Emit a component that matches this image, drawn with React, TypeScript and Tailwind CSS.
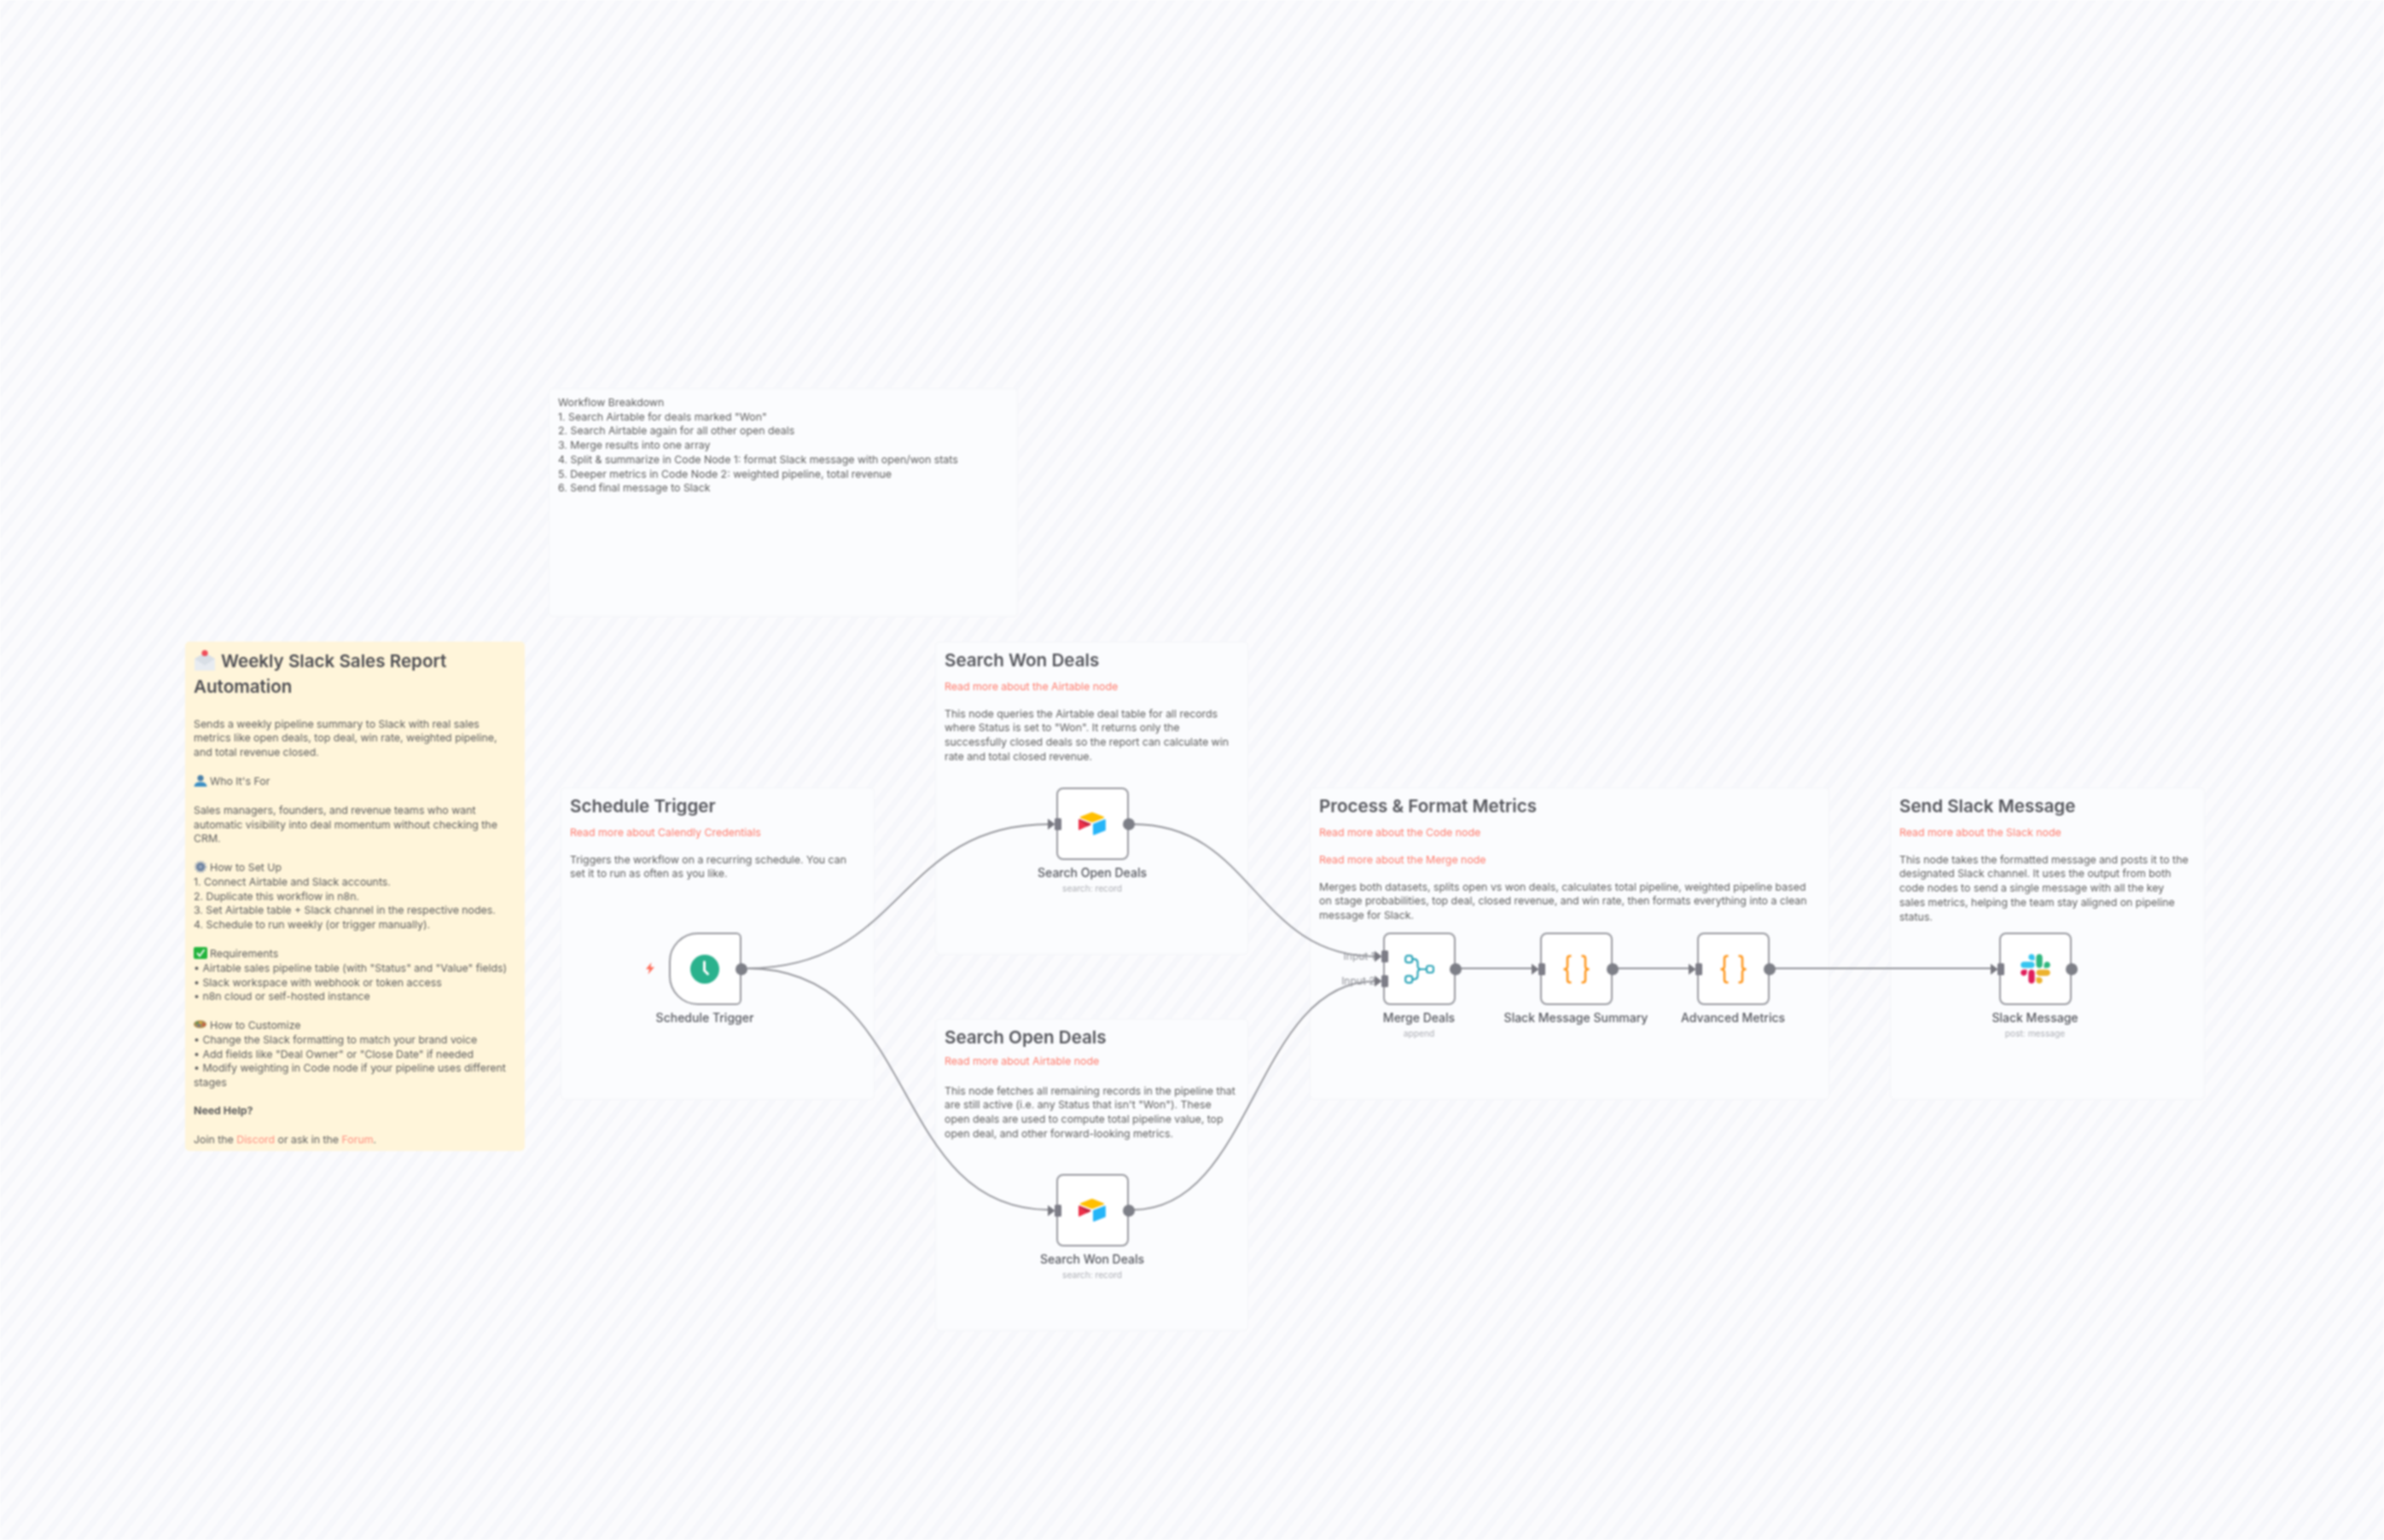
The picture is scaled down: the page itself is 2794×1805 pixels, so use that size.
import React from "react";

const bodyFont = "font-['Inter',sans-serif]";

function Mail() {
  return (
    <svg viewBox="0 0 26 26" className="inline-block w-[26px] h-[26px] mr-[6px] align-[-5px]">
      <path d="M1 11 L13 4 L25 11 V25 H1 Z" fill="#d9dfe6" />
      <path d="M1 11 L13 19 L25 11 V25 H1 Z" fill="#e8ecf1" />
      <circle cx="13" cy="4.5" r="3.6" fill="#ef4d5a" />
    </svg>
  );
}

function Person() {
  return (
    <svg viewBox="0 0 16 14" className="inline-block w-[16px] h-[14px] mr-[3px] align-[-2px]">
      <circle cx="8" cy="4" r="3.6" fill="#4a7fa8" />
      <path d="M0.5 14 C1 9.5 4.5 8.5 8 8.5 C11.5 8.5 15 9.5 15.5 14 Z" fill="#3d8fc4" />
    </svg>
  );
}

function Gear() {
  return (
    <svg viewBox="0 0 16 16" className="inline-block w-[16px] h-[14px] mr-[3px] align-[-2px]">
      <circle cx="8" cy="8" r="6" fill="#6f83a0" />
      <circle cx="8" cy="8" r="7.3" fill="none" stroke="#8d9cb3" strokeWidth="1.6" strokeDasharray="2 1.6" />
      <circle cx="8" cy="8" r="2.4" fill="#9aa9bf" />
    </svg>
  );
}

function Check() {
  return (
    <svg viewBox="0 0 16 14" className="inline-block w-[16px] h-[14px] mr-[3px] align-[-2px]">
      <rect x="0" y="0" width="16" height="14" rx="2" fill="#22b43c" />
      <path d="M4 7 L7 10.5 L12.5 3" fill="none" stroke="#e9f7ea" strokeWidth="2" />
    </svg>
  );
}

function Palette() {
  return (
    <svg viewBox="0 0 16 12" className="inline-block w-[16px] h-[12px] mr-[3px] align-[-1px]">
      <ellipse cx="7.5" cy="5.5" rx="7.5" ry="4.6" fill="#a98a52" />
      <circle cx="4" cy="4" r="1.5" fill="#4f9a5a" />
      <circle cx="8" cy="3.4" r="1.4" fill="#e2b93b" />
      <circle cx="12" cy="6" r="1.8" fill="#d2553f" />
      <circle cx="6" cy="7" r="1.3" fill="#5a6fb0" />
    </svg>
  );
}

function AirtableLogo() {
  return (
    <svg viewBox="0 0 200 170" className="w-[36px] h-[31px]">
      <path d="M90.039 12.368 24.079 39.66c-3.667 1.519-3.63 6.729.062 8.192l66.235 26.266a24.58 24.58 0 0 0 18.12 0l66.236-26.266c3.69-1.463 3.729-6.673.062-8.192l-65.96-27.292a24.58 24.58 0 0 0-18.795 0" fill="#FFBF00" />
      <path d="M105.312 88.46v65.617c0 3.12 3.147 5.258 6.048 4.108l73.806-28.648a4.42 4.42 0 0 0 2.79-4.108V59.813c0-3.121-3.147-5.258-6.048-4.108l-73.806 28.648a4.42 4.42 0 0 0-2.79 4.108" fill="#26B5F8" />
      <path d="M88.078 91.846l-21.904 10.576-2.224 1.075-46.238 22.155c-2.93 1.414-6.672-.722-6.672-3.978V60.088c0-1.178.604-2.195 1.414-2.96a5.02 5.02 0 0 1 1.12-.84c1.104-.663 2.68-.84 4.02-.31l70.118 27.782c3.564 1.414 3.844 6.408.366 8.086" fill="#ED3049" />
      <path d="M88.078 91.846l-21.904 10.576-53.72-45.295a5.02 5.02 0 0 1 1.12-.839c1.104-.663 2.68-.84 4.02-.31l70.118 27.782c3.564 1.414 3.844 6.408.366 8.086" fill="#C62842" />
    </svg>
  );
}

function SlackLogo() {
  return (
    <svg viewBox="0 0 127 127" className="w-[35px] h-[35px]">
      <path d="M27.2 80c0 7.3-5.9 13.2-13.2 13.2C6.7 93.2.8 87.3.8 80c0-7.3 5.9-13.2 13.2-13.2h13.2V80zm6.6 0c0-7.3 5.9-13.2 13.2-13.2 7.3 0 13.2 5.9 13.2 13.2v33c0 7.3-5.9 13.2-13.2 13.2-7.3 0-13.2-5.9-13.2-13.2V80z" fill="#E01E5A" />
      <path d="M47 27c-7.3 0-13.2-5.9-13.2-13.2C33.8 6.5 39.7.6 47 .6c7.3 0 13.2 5.9 13.2 13.2V27H47zm0 6.7c7.3 0 13.2 5.9 13.2 13.2 0 7.3-5.9 13.2-13.2 13.2H13.9C6.6 60.1.7 54.2.7 46.9c0-7.3 5.9-13.2 13.2-13.2H47z" fill="#36C5F0" />
      <path d="M99.9 46.9c0-7.3 5.9-13.2 13.2-13.2 7.3 0 13.2 5.9 13.2 13.2 0 7.3-5.9 13.2-13.2 13.2H99.9V46.9zm-6.6 0c0 7.3-5.9 13.2-13.2 13.2-7.3 0-13.2-5.9-13.2-13.2V13.8C66.9 6.5 72.8.6 80.1.6c7.3 0 13.2 5.9 13.2 13.2v33.1z" fill="#2EB67D" />
      <path d="M80.1 99.8c7.3 0 13.2 5.9 13.2 13.2 0 7.3-5.9 13.2-13.2 13.2-7.3 0-13.2-5.9-13.2-13.2V99.8h13.2zm0-6.6c-7.3 0-13.2-5.9-13.2-13.2 0-7.3 5.9-13.2 13.2-13.2h33.1c7.3 0 13.2 5.9 13.2 13.2 0 7.3-5.9 13.2-13.2 13.2H80.1z" fill="#ECB22E" />
    </svg>
  );
}

function CodeIcon() {
  return (
    <svg viewBox="0 0 33 34" className="w-[33px] h-[34px]" fill="none" stroke="#ff9922" strokeWidth="2.6">
      <path d="M10.5 1.5 H9 Q6 1.5 6 4.5 V13.5 Q6 17 1.5 17 Q6 17 6 20.5 V29.5 Q6 32.5 9 32.5 H10.5" />
      <path d="M22.5 1.5 H24 Q27 1.5 27 4.5 V13.5 Q27 17 31.5 17 Q27 17 27 20.5 V29.5 Q27 32.5 24 32.5 H22.5" />
    </svg>
  );
}

function MergeIcon() {
  return (
    <svg viewBox="0 0 35 34" className="w-[35px] h-[34px]" fill="none" stroke="#2da5b8" strokeWidth="2.2">
      <rect x="1.2" y="1.2" width="8" height="8" rx="2.5" />
      <rect x="1.2" y="24.8" width="8" height="8" rx="2.5" />
      <rect x="26" y="13" width="8" height="8" rx="2.5" />
      <path d="M9.2 5.2 H11 Q15.5 5.2 15.5 10 V13 Q15.5 17 20 17 H26" />
      <path d="M9.2 28.8 H11 Q15.5 28.8 15.5 24 V21 Q15.5 17 20 17" />
    </svg>
  );
}

function ClockIcon() {
  return (
    <div className="w-[34px] h-[34px] rounded-full bg-[#2ab28d] flex items-center justify-center">
      <svg viewBox="0 0 34 34" className="w-[34px] h-[34px]" fill="none" stroke="#fff" strokeWidth="3" strokeLinecap="round">
        <path d="M16.5 8.5 V18.5 L20.5 22.5" />
      </svg>
    </div>
  );
}

function Input() {
  return (
    <svg viewBox="0 0 16 14" className="w-[16px] h-[14px]">
      <path d="M0 0.5 L8.5 7 L0 13.5 Z" fill="#77777f" />
      <rect x="8" y="0" width="8" height="14" rx="1.5" fill="#7d7d87" />
    </svg>
  );
}

function Output({ className }: { className: string }) {
  return <div className={`absolute w-[14px] h-[14px] rounded-full bg-[#7d7f87] ${className}`} />;
}

interface NodeProps {
  pos: string;
  name: string;
  sub?: string;
  shape?: string;
  children: React.ReactNode;
  input?: boolean;
}

// pos centres a 220px column on the node box
function Node({ pos, name, sub, shape = "rounded-[8px]", children, input = true }: NodeProps) {
  return (
    <div className={`absolute w-[220px] flex flex-col items-center ${pos}`}>
      <div className={`relative w-[85px] h-[85px] bg-white border-[2px] border-[#98999f] flex items-center justify-center ${shape}`}>
        {children}
        {input && (
          <div className="absolute left-[-12px] top-[33.5px] flex">
            <Input />
          </div>
        )}
        <Output className="right-[-9px] top-[33.5px]" />
      </div>
      <div className="mt-[5.5px] text-[14px] leading-[18px] font-medium text-[#55575e] whitespace-nowrap">{name}</div>
      {sub && <div className="mt-[2.7px] text-[10.2px] leading-[15px] text-[#abadb3] whitespace-nowrap">{sub}</div>}
    </div>
  );
}

function Card({ pos, title, children }: { pos: string; title: string; children: React.ReactNode }) {
  return (
    <div className={`absolute rounded-[5px] bg-[#fbfcfe] border border-[#f3f4f8] px-[10px] pt-[7px] ${pos}`}>
      <h2 className="text-[20.6px] leading-[28px] font-semibold text-[#55565c]">{title}</h2>
      {children}
    </div>
  );
}

function A({ children, className = "" }: { children: React.ReactNode; className?: string }) {
  return <p className={`text-[#ff7a6b] ${className}`}>{children}</p>;
}

function Sticky() {
  return (
    <div className="absolute left-[217px] top-[752px] w-[398px] h-[597px] rounded-[5px] bg-[#fff5da] px-[10px] pt-[8px] text-[12.35px] leading-[16.7px] text-[#5c5c5c]">
      <h1 className="text-[20.6px] leading-[30px] font-semibold text-[#4d4d52]">
        <Mail />
        Weekly Slack Sales Report Automation
      </h1>
      <p className="mt-[20.5px]">
        Sends a weekly pipeline summary to Slack with real sales metrics like open deals, top deal, win rate, weighted pipeline, and total revenue closed.
      </p>
      <p className="mt-[17.3px]"><Person />Who It's For</p>
      <p className="mt-[17.3px]">
        Sales managers, founders, and revenue teams who want automatic visibility into deal momentum without checking the CRM.
      </p>
      <p className="mt-[17.3px]"><Gear />How to Set Up</p>
      <p>1. Connect Airtable and Slack accounts.</p>
      <p>2. Duplicate this workflow in n8n.</p>
      <p>3. Set Airtable table + Slack channel in the respective nodes.</p>
      <p>4. Schedule to run weekly (or trigger manually).</p>
      <p className="mt-[17.3px]"><Check />Requirements</p>
      <p>• Airtable sales pipeline table (with "Status" and "Value" fields)</p>
      <p>• Slack workspace with webhook or token access</p>
      <p>• n8n cloud or self-hosted instance</p>
      <p className="mt-[17.3px]"><Palette />How to Customize</p>
      <p>• Change the Slack formatting to match your brand voice</p>
      <p>• Add fields like "Deal Owner" or "Close Date" if needed</p>
      <p>• Modify weighting in Code node if your pipeline uses different stages</p>
      <p className="mt-[16px] font-bold">Need Help?</p>
      <p className="mt-[17.3px]">
        Join the <span className="text-[#ff8f80]">Discord</span> or ask in the <span className="text-[#ff8f80]">Forum</span>.
      </p>
    </div>
  );
}

export default function App() {
  return (
    <div className={`relative w-[2794px] h-[1805px] overflow-hidden bg-[repeating-linear-gradient(-52deg,#f6f7fb_0px,#f6f7fb_7px,#fbfbfd_7px,#fbfbfd_17px)] ${bodyFont} blur-[0.8px]`}>
      <Sticky />

      <div className="absolute left-[643px] top-[455px] w-[550px] h-[268px] rounded-[5px] bg-[#fbfcfe] border border-[#f3f4f8] px-[10px] pt-[8px] text-[12.35px] leading-[16.7px] text-[#5c5c5c]">
        <p>Workflow Breakdown</p>
        <p>1. Search Airtable for deals marked "Won"</p>
        <p>2. Search Airtable again for all other open deals</p>
        <p>3. Merge results into one array</p>
        <p>4. Split &amp; summarize in Code Node 1: format Slack message with open/won stats</p>
        <p>5. Deeper metrics in Code Node 2: weighted pipeline, total revenue</p>
        <p>6. Send final message to Slack</p>
      </div>

      <Card pos="left-[657px] top-[923px] w-[368px] h-[366px] text-[12.35px] leading-[16.7px] text-[#5c5c5c]" title="Schedule Trigger">
        <A className="mt-[8.7px]">Read more about Calendly Credentials</A>
        <p className="mt-[15.3px] w-[343.3px]">Triggers the workflow on a recurring schedule. You can set it to run as often as you like.</p>
      </Card>

      <Card pos="left-[1096px] top-[752px] w-[367px] h-[367px] text-[12.35px] leading-[16.7px] text-[#5c5c5c]" title="Search Won Deals">
        <A className="mt-[8.7px]">Read more about the Airtable node</A>
        <p className="mt-[15.3px] w-[343.3px]">This node queries the Airtable deal table for all records where Status is set to "Won". It returns only the successfully closed deals so the report can calculate win rate and total closed revenue.</p>
      </Card>

      <Card pos="left-[1096px] top-[1194px] w-[367px] h-[366px] text-[12.35px] leading-[16.7px] text-[#5c5c5c]" title="Search Open Deals">
        <A className="mt-[5.7px]">Read more about Airtable node</A>
        <p className="mt-[18.3px] w-[343.3px]">This node fetches all remaining records in the pipeline that are still active (i.e. any Status that isn't "Won"). These open deals are used to compute total pipeline value, top open deal, and other forward-looking metrics.</p>
      </Card>

      <Card pos="left-[1535px] top-[923px] w-[609px] h-[366px] text-[12.35px] leading-[16.7px] text-[#5c5c5c]" title="Process & Format Metrics">
        <A className="mt-[8.7px]">Read more about the Code node</A>
        <A className="mt-[15.3px]">Read more about the Merge node</A>
        <p className="mt-[15.3px]">Merges both datasets, splits open vs won deals, calculates total pipeline, weighted pipeline based on stage probabilities, top deal, closed revenue, and win rate, then formats everything into a clean message for Slack.</p>
      </Card>

      <Card pos="left-[2215px] top-[923px] w-[369px] h-[366px] text-[12.35px] leading-[16.7px] text-[#5c5c5c]" title="Send Slack Message">
        <A className="mt-[8.7px]">Read more about the Slack node</A>
        <p className="mt-[15.3px] w-[343.3px]">This node takes the formatted message and posts it to the designated Slack channel. It uses the output from both code nodes to send a single message with all the key sales metrics, helping the team stay aligned on pipeline status.</p>
      </Card>

      <svg className="absolute left-0 top-0 w-[2794px] h-[1805px]" viewBox="0 0 2794 1805" fill="none" stroke="#93949a" strokeWidth="1.8">
        <path d="M876 1135 C1060 1135 1050 966 1230 966" />
        <path d="M876 1135 C1080 1135 1040 1418 1230 1418" />
        <path d="M1328 966 C1470 966 1470 1121 1612 1121" />
        <path d="M1328 1418 C1470 1418 1470 1150 1612 1150" />
        <path d="M1712 1135 H1796" strokeWidth="2.2" />
        <path d="M1896 1135 H1980" strokeWidth="2.2" />
        <path d="M2080 1135 H2334" strokeWidth="2.2" />
      </svg>

      <svg viewBox="0 0 12 14" className="absolute left-[756px] top-[1128px] w-[12px] h-[14px]">
        <path d="M7.5 0 L1 8 H5 L3.5 14 L11 5.5 H6.5 Z" fill="#ff6d5a" />
      </svg>

      <Node pos="left-[716px] top-[1093px]" name="Schedule Trigger" shape="rounded-l-[34px] rounded-r-[6px]" input={false}>
        <ClockIcon />
      </Node>
      <Node pos="left-[1170px] top-[923px]" name="Search Open Deals" sub="search: record">
        <AirtableLogo />
      </Node>
      <Node pos="left-[1170px] top-[1376px]" name="Search Won Deals" sub="search: record">
        <AirtableLogo />
      </Node>
      <Node pos="left-[1553px] top-[1093px]" name="Merge Deals" sub="append" input={false}>
        <MergeIcon />
        <div className="absolute left-[-12px] top-[19px]"><Input /></div>
        <div className="absolute left-[-12px] top-[48px]"><Input /></div>
        <span className="absolute right-[92px] top-[19px] text-[12px] leading-[13px] text-[#8f9197] whitespace-nowrap">Input 1</span>
        <span className="absolute right-[92px] top-[48px] text-[12px] leading-[13px] text-[#8f9197] whitespace-nowrap">Input 2</span>
      </Node>
      <Node pos="left-[1737px] top-[1093px]" name="Slack Message Summary">
        <CodeIcon />
      </Node>
      <Node pos="left-[1921px] top-[1093px]" name="Advanced Metrics">
        <CodeIcon />
      </Node>
      <Node pos="left-[2275px] top-[1093px]" name="Slack Message" sub="post: message">
        <SlackLogo />
      </Node>
    </div>
  );
}
